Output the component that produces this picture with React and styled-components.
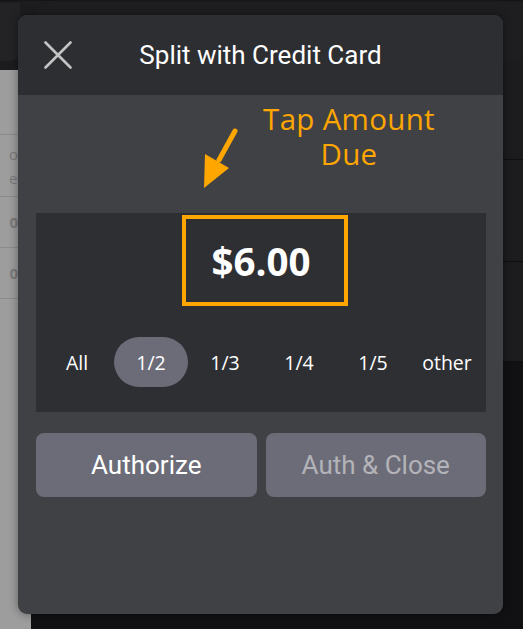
import React, { useState } from 'react';
import styled, { createGlobalStyle } from 'styled-components';

const GlobalStyle = createGlobalStyle`
	html, body {
		margin: 0;
		padding: 0;
		background: #111113;
		font-family: Roboto, 'Noto Sans', sans-serif;
	}
`;

const Screen = styled.div`
	position: relative;
	width: 523px;
	height: 629px;
	overflow: hidden;
	display: flex;
	flex-direction: column;
	background: #111113;
`;

const TopBar = styled.div`
	height: 70px;
	display: flex;
	gap: 12px;
	padding-top: 2px;
	box-sizing: border-box;
	background: #1c1c1e;
	border-top: 1px solid #151517;
`;

const TopChip = styled.div`
	width: ${({ w }) => w}px;
	height: 58px;
	border-radius: 0 0 10px 0;
	background: #232326;
`;

const TopTab = styled.div`
	flex: 1;
	height: 58px;
	border-radius: 20px 0 0 0;
	background: #1e1e21;
`;

const Lower = styled.div`
	flex: 1;
	display: flex;
`;

const LeftPane = styled.div`
	width: 31px;
	display: flex;
	flex-direction: column;
	background: #9d9d9d;
	color: #7a7a7a;
	font-family: 'Open Sans', sans-serif;
	font-weight: 700;
	font-size: 15px;
`;

const LeftRow = styled.div`
	height: ${({ h }) => h}px;
	box-sizing: border-box;
	border-bottom: 1px solid #8a8a8a;
	display: flex;
	align-items: center;
	justify-content: flex-end;
	padding-right: 13px;
	white-space: nowrap;
`;

const RightPane = styled.div`
	flex: 1;
	display: flex;
	justify-content: flex-end;
`;

const RightList = styled.div`
	width: 40px;
	height: 292px;
	display: flex;
	flex-direction: column;
	background: #1c1c1f;
`;

const RightRow = styled.div`
	height: ${({ h }) => h}px;
	border-bottom: 1px solid #0f0f11;
`;

const Modal = styled.div`
	position: absolute;
	left: 18px;
	top: 15px;
	width: 485px;
	height: 599px;
	border-radius: 9px;
	overflow: hidden;
	background: #404145;
	display: flex;
	flex-direction: column;
	box-shadow: 0 0 10px rgba(0, 0, 0, 0.4);
`;

const Header = styled.div`
	height: 80px;
	display: flex;
	align-items: center;
	background: #2d2e32;
`;

const CloseButton = styled.button`
	width: 30px;
	height: 30px;
	margin-left: 25px;
	padding: 0;
	border: none;
	background: transparent;
	display: flex;
	align-items: center;
	justify-content: center;
	cursor: pointer;
`;

const Title = styled.h2`
	flex: 1;
	margin: 0;
	padding-right: 55px;
	text-align: center;
	font-family: Roboto, sans-serif;
	font-weight: 400;
	font-size: 26px;
	color: #ffffff;
`;

const Body = styled.div`
	flex: 1;
	display: flex;
	flex-direction: column;
	padding: 0 17px 0 18px;
`;

const Annotation = styled.div`
	height: 118px;
	display: flex;
	align-items: flex-start;
`;

const Arrow = styled.svg`
	margin-left: 164px;
	margin-top: 33px;
	flex-shrink: 0;
`;

const Callout = styled.div`
	margin-left: 9px;
	margin-top: 6px;
	width: 200px;
	text-align: center;
	font-family: 'Open Sans', sans-serif;
	font-size: 29.5px;
	line-height: 35px;
	color: #ffa600;
	letter-spacing: 0.3px;
	white-space: nowrap;
`;

const Panel = styled.div`
	height: 199px;
	display: flex;
	flex-direction: column;
	align-items: flex-start;
	background: #2e2f33;
`;

const AmountBox = styled.div`
	margin: 2px 0 0 146px;
	width: 166px;
	height: 91px;
	box-sizing: border-box;
	border: 4px solid #ffa600;
	padding-right: 8px;
	display: flex;
	align-items: center;
	justify-content: center;
	font-family: 'Open Sans', sans-serif;
	font-weight: 700;
	font-size: 38.5px;
	color: #ffffff;
`;

const Splits = styled.div`
	margin-top: 31px;
	width: 100%;
	padding: 0 4px;
	box-sizing: border-box;
	display: grid;
	grid-template-columns: repeat(6, 1fr);
`;

const SplitOption = styled.button`
	justify-self: center;
	width: 74px;
	height: 50px;
	border: none;
	border-radius: 25px;
	padding: 0;
	background: ${({ $active }) => ($active ? '#6b6c78' : 'transparent')};
	color: #ffffff;
	font-family: 'Open Sans', sans-serif;
	font-size: 19.5px;
	cursor: pointer;
`;

const Actions = styled.div`
	margin-top: 21px;
	display: grid;
	grid-template-columns: 1fr 1fr;
	gap: 9px;
`;

const ActionButton = styled.button`
	height: 64px;
	border: none;
	border-radius: 8px;
	background: #6b6c78;
	color: ${({ disabled }) => (disabled ? '#b3b3b8' : '#ffffff')};
	font-family: Roboto, sans-serif;
	font-size: 26px;
	cursor: ${({ disabled }) => (disabled ? 'default' : 'pointer')};
`;

const splits = ['All', '1/2', '1/3', '1/4', '1/5', 'other'];

const App = () => {
	const [selected, setSelected] = useState('1/2');

	return (
		<>
			<GlobalStyle />
			<Screen>
				<TopBar>
					<TopChip w={20} />
					<TopTab />
				</TopBar>
				<Lower>
					<LeftPane>
						<LeftRow h={65} />
						<LeftRow h={62}>
							<span style={{ lineHeight: '24px', fontWeight: 400 }}>
								o<br />e
							</span>
						</LeftRow>
						<LeftRow h={51}>0</LeftRow>
						<LeftRow h={51}>0</LeftRow>
					</LeftPane>
					<RightPane>
						<RightList>
							<RightRow h={90} />
							<RightRow h={101} />
							<RightRow h={100} />
						</RightList>
					</RightPane>
				</Lower>

				<Modal>
					<Header>
						<CloseButton aria-label='Close'>
							<svg width='28' height='28' viewBox='0 0 28 28'>
								<path
									d='M1.5 1.5 L26.5 26.5 M26.5 1.5 L1.5 26.5'
									stroke='#c4c4c4'
									strokeWidth='2.6'
									strokeLinecap='round'
								/>
							</svg>
						</CloseButton>
						<Title>Split with Credit Card</Title>
					</Header>

					<Body>
						<Annotation>
							<Arrow width='40' height='62' viewBox='0 0 40 62'>
								<line x1='35' y1='3' x2='19' y2='32' stroke='#ffa600' strokeWidth='5' strokeLinecap='round' />
								<polygon points='4,60 5,26 29,40' fill='#ffa600' />
							</Arrow>
							<Callout>
								Tap Amount
								<br />
								Due
							</Callout>
						</Annotation>

						<Panel>
							<AmountBox>$6.00</AmountBox>
							<Splits>
								{splits.map((label) => (
									<SplitOption
										key={label}
										$active={selected === label}
										onClick={() => setSelected(label)}
									>
										{label}
									</SplitOption>
								))}
							</Splits>
						</Panel>

						<Actions>
							<ActionButton>Authorize</ActionButton>
							<ActionButton disabled>Auth &amp; Close</ActionButton>
						</Actions>
					</Body>
				</Modal>
			</Screen>
		</>
	);
};

export default App;
